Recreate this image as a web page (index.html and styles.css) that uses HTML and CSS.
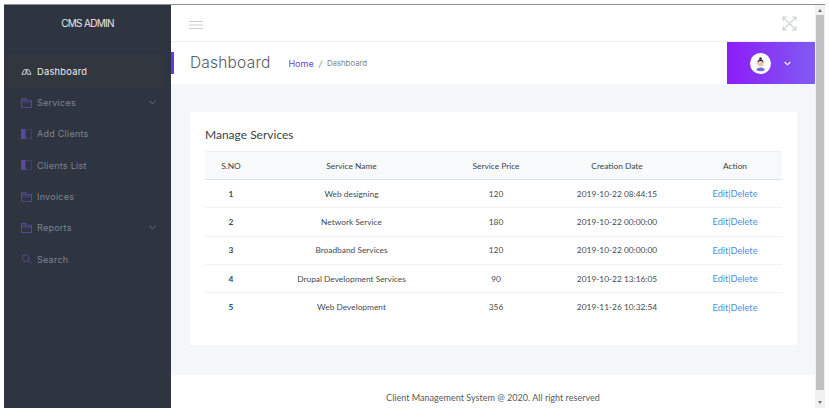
FILE: index.html
```html
<!DOCTYPE html>
<html lang="en">
<head>
<meta charset="utf-8">
<title>CMS Admin</title>
<link rel="stylesheet" href="styles.css">
</head>
<body>
<div class="frame">
  <aside class="sidebar">
    <div class="brand">CMS ADMIN</div>
    <nav class="menu">
      <a class="item active"><svg class="ico" viewBox="0 0 12 8"><path d="M1 6.500 3.500 1.500h5L11 6.500M1 6.500h4L6 1.500l1 5h4" fill="none" stroke="currentColor" stroke-width="1"/></svg><span>Dashboard</span></a>
      <a class="item"><svg class="ico" viewBox="0 0 12 11"><path d="M.5 2.500V10.500h11V2.500zM.5 2.500V.5h5v2M.5 4.500h11" fill="none" stroke="currentColor"/></svg><span>Services</span><svg class="chev" viewBox="0 0 8 5"><path d="M.5.5 4 4 7.500.5" fill="none" stroke="currentColor"/></svg></a>
      <a class="item"><svg class="ico" viewBox="0 0 12 11"><path d="M0 0h5v11H0z" fill="currentColor"/><path d="M5 .5h6.500v10H5" fill="none" stroke="currentColor" stroke-opacity=".55"/></svg><span>Add Clients</span></a>
      <a class="item"><svg class="ico" viewBox="0 0 12 11"><path d="M0 0h5v11H0z" fill="currentColor"/><path d="M5 .5h6.500v10H5" fill="none" stroke="currentColor" stroke-opacity=".55"/></svg><span>Clients List</span></a>
      <a class="item"><svg class="ico" viewBox="0 0 12 11"><path d="M.5 2.500V10.500h11V2.500zM.5 2.500V.5h5v2M.5 4.500h11" fill="none" stroke="currentColor"/></svg><span>Invoices</span></a>
      <a class="item"><svg class="ico" viewBox="0 0 12 11"><path d="M.5 2.500V10.500h11V2.500zM.5 2.500V.5h5v2M.5 4.500h11" fill="none" stroke="currentColor"/></svg><span>Reports</span><svg class="chev" viewBox="0 0 8 5"><path d="M.5.5 4 4 7.500.5" fill="none" stroke="currentColor"/></svg></a>
      <a class="item"><svg class="ico" viewBox="0 0 12 11"><circle cx="5" cy="4.500" r="3.800" fill="none" stroke="currentColor"/><path d="M8 7.500 11 10.500" stroke="currentColor"/></svg><span>Search</span></a>
    </nav>
  </aside>
  <main class="main">
    <header class="topbar">
      <svg class="burger" viewBox="0 0 14 8"><path d="M0 .5h14M0 4h14M0 7.500h14" stroke="#c9cdd0"/></svg>
      <svg class="expand" viewBox="0 0 15 15"><path d="M1 5V1h4M10 1h4v4M14 10v4h-4M5 14H1v-4M1 1l13 13M14 1 1 14" fill="none" stroke="#cfd2d4" stroke-width="1.100"/></svg>
    </header>
    <section class="titlebar">
      <div class="marker"></div>
      <h1>Dashboard</h1>
      <div class="crumbs"><a>Home</a><i>/</i><span>Dashboard</span></div>
      <div class="user">
        <span class="avatar"><svg viewBox="0 0 20 20"><circle cx="10" cy="10" r="10" fill="#fff"/><path d="M6 16.500c0-1.800 1.800-2.800 4-2.800s4 1 4 2.800c-2.500 1.200-5.500 1.200-8 0z" fill="#6f6fd8"/><circle cx="10" cy="9.800" r="3" fill="#f5c3a5"/><path d="M7 9.300c0-2 1.300-3.300 3-3.300s3 1.300 3 3.300c-1-1.200-1.800-1.700-3-1.700s-2 .5-3 1.700z" fill="#2c2f3a"/><circle cx="10" cy="5.200" r="1.200" fill="#2c2f3a"/></svg></span>
        <svg class="uchev" viewBox="0 0 8 5"><path d="M.8.8 4 4 7.200.8" fill="none" stroke="#fff" stroke-width="1.300"/></svg>
      </div>
    </section>
    <section class="content">
      <div class="card">
        <h2>Manage Services</h2>
        <table>
          <thead>
            <tr><th>S.NO</th><th>Service Name</th><th>Service Price</th><th>Creation Date</th><th>Action</th></tr>
          </thead>
          <tbody>
            <tr><td class="num">1</td><td>Web designing</td><td>120</td><td>2019-10-22 08:44:15</td><td class="act"><a>Edit</a>|<a>Delete</a></td></tr>
            <tr><td class="num">2</td><td>Network Service</td><td>180</td><td>2019-10-22 00:00:00</td><td class="act"><a>Edit</a>|<a>Delete</a></td></tr>
            <tr><td class="num">3</td><td>Broadband Services</td><td>120</td><td>2019-10-22 00:00:00</td><td class="act"><a>Edit</a>|<a>Delete</a></td></tr>
            <tr><td class="num">4</td><td>Drupal Development Services</td><td>90</td><td>2019-10-22 13:16:05</td><td class="act"><a>Edit</a>|<a>Delete</a></td></tr>
            <tr><td class="num">5</td><td>Web Development</td><td>356</td><td>2019-11-26 10:32:54</td><td class="act"><a>Edit</a>|<a>Delete</a></td></tr>
          </tbody>
        </table>
      </div>
    </section>
    <footer class="footer">Client Management System @ 2020. All right reserved</footer>
  </main>
  <div class="scrollbar"><span class="up"></span><span class="thumb"></span><span class="down"></span></div>
</div>
</body>
</html>
```

FILE: styles.css
```css
* { box-sizing: border-box; }
html, body { margin: 0; height: 100%; background: #fff; overflow: hidden; }
body { padding: 4px 4px 6px 4px; font-family: Lato, sans-serif; color: #3e4b5b; }
.frame { display: flex; height: 404px; border-top: 1px solid #8f8f8f; }
.sidebar { width: 167px; background: #2e3541; flex: none; font-family: Inter, sans-serif; }
.brand { height: 50px; padding-top: 6px; text-align: center; color: #e8e9ec; font-size: 10px; letter-spacing: -.7px; line-height: 25px; font-family: Inter, sans-serif; }
.menu { display: flex; flex-direction: column; }
.item { display: flex; align-items: center; height: 31.300px; padding-left: 17px; padding-right: 15px; color: #7f8490; font-size: 9px; letter-spacing: .25px; }
.item span { margin-left: 5px; flex: 1; }
.item .ico { width: 11px; height: 10px; color: #5a4a9a; flex: none; }
.item .chev { width: 7px; height: 5px; color: #757a85; flex: none; }
.item.active { height: 33px; margin-bottom: -1px; margin-right: 6px; background: #31363f; color: #eceef0; font-size: 9.300px; }
.item.active .ico { color: #d6d8dc; height: 8px; }
.main { flex: 1; display: flex; flex-direction: column; min-width: 0; }
.topbar { height: 37px; flex: none; display: flex; align-items: center; justify-content: space-between; border-bottom: 1px solid #eceff1; padding: 3px 18px 0 18px; }
.burger { width: 14px; height: 8px; }
.expand { width: 15px; height: 15px; margin-top: -2px; }
.titlebar { height: 42px; flex: none; display: flex; align-items: center; position: relative; }
.marker { position: absolute; left: 0; top: 10px; width: 3px; height: 22px; background: #5b3fe0; }
h1 { margin: 0 0 0 19px; font: 300 15.500px/1 Inter, sans-serif; color: #565c66; letter-spacing: .2px; }
.crumbs { margin-left: 18px; font: 9px Inter, sans-serif; color: #8a9099; display: flex; gap: 5px; }
.crumbs a { color: #6a3fd8; }
.crumbs span { color: #7d848c; font-size: 7.800px; line-height: 11px; }
.user { margin-left: auto; width: 88px; height: 100%; background: linear-gradient(90deg, #8d1cf9, #7f5cf0); display: flex; align-items: center; padding-left: 23px; gap: 13px; }
.avatar { width: 21px; height: 21px; display: block; }
.avatar svg { display: block; width: 100%; height: 100%; }
.uchev { width: 7px; height: 5px; }
.content { flex: 1; background: #f3f7f9; padding: 28px 18px 30px 19px; min-height: 0; }
.card { background: #fff; height: 233px; padding: 14px 15px; }
h2 { margin: 0 0 8px; font: 400 12px/17px Lato, sans-serif; color: #3a3f45; }
table { width: 100%; border-collapse: collapse; table-layout: fixed; font-size: 8.350px; color: #444b53; }
th { background: #f7f9fa; height: 28px; font-weight: 400; border-top: 1px solid #eef0f2; border-bottom: 1px solid #dfe3e8; padding: 0; color: #3c4249; }
td { height: 28.300px; text-align: center; border-bottom: 1px solid #f0f2f4; padding: 0; }
tbody tr:last-child td { border-bottom: 0; }
th:nth-child(1) { width: 52px; }
th:nth-child(2) { width: 189px; }
th:nth-child(3) { width: 100px; }
th:nth-child(4) { width: 142px; }
.num { font-weight: 700; }
tr:nth-child(n+3) .num { color: #2a4a6a; }
.act { color: #5b8fe0; font-size: 9.200px; }
.act a { color: #4a90e2; }
.footer { height: 33px; flex: none; background: #fff; text-align: center; font-size: 9.050px; line-height: 46px; color: #555b63; }
.scrollbar { width: 10px; flex: none; background: #f1f1f1; display: flex; flex-direction: column; }
.up, .down { flex: none; display: flex; justify-content: center; }
.up { height: 10px; padding-top: 4px; }
.down { height: 18px; padding-top: 11px; }
.up::before { content: ""; width: 0; height: 0; border: 2px solid transparent; border-top: 0; border-bottom: 3px solid #6e6e6e; }
.down::before { content: ""; width: 0; height: 0; border: 2px solid transparent; border-bottom: 0; border-top: 3px solid #6e6e6e; }
.thumb { flex: 1; background: #c1c1c1; margin: 0 1px; }
```
